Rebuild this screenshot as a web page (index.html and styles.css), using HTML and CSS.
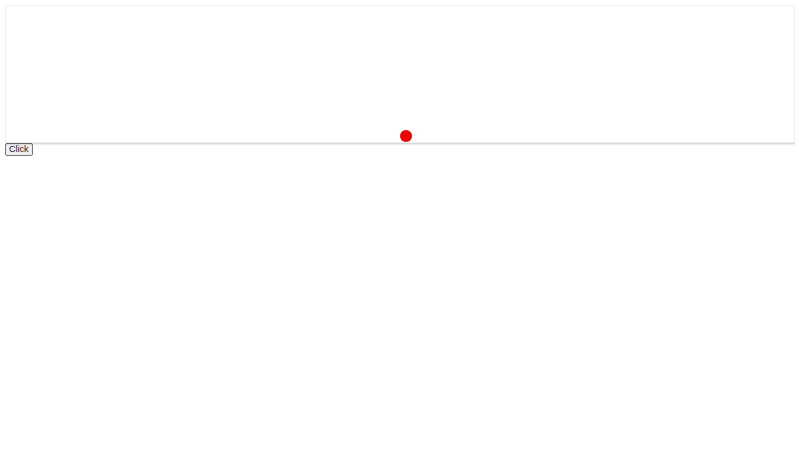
FILE: index.html
```html
<!DOCTYPE html>
<html>
<head>
<meta charset="utf-8">
<link rel="stylesheet" href="styles.css">
</head>
<body>
<div class="stage">
  <span class="dot"></span>
</div>
<button class="btn">Click</button>
</body>
</html>
```
FILE: styles.css
```css
body {
  margin: 5px;
  font-family: "Liberation Sans", Arial, sans-serif;
  background: #fff;
}
.stage {
  position: relative;
  height: 136px;
  background: #fff;
  border: 1px solid #f0f0f0;
  box-shadow: 0 1px 2px rgba(0, 0, 0, 0.22);
}
.dot {
  position: absolute;
  left: 50%;
  bottom: 0;
  width: 12px;
  height: 12px;
  border-radius: 50%;
  background: #ee0000;
}
.btn {
  display: block;
  font-family: "Liberation Sans", Arial, sans-serif;
  font-size: 9px;
  line-height: 11px;
  padding: 0 3px;
  margin: 0;
  color: #222;
  background: #efefef;
  border: 1px solid #767676;
  border-radius: 2px;
}
```
